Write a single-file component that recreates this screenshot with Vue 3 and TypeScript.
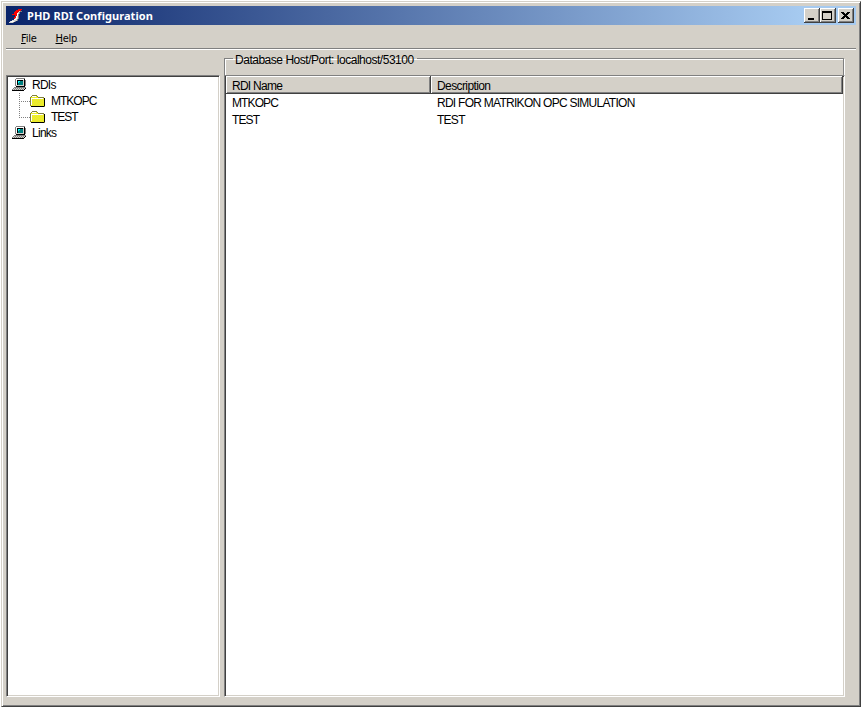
<script setup lang="ts">
interface Rdi {
  name: string
  description: string
}

const rdis: Rdi[] = [
  { name: 'MTKOPC', description: 'RDI FOR MATRIKON OPC SIMULATION' },
  { name: 'TEST', description: 'TEST' },
]
</script>

<template>
  <div class="window">
    <header class="titlebar">
      <svg class="logo" width="16" height="16" viewBox="0 0 16 16" shape-rendering="crispEdges">
        <path fill="#808080" d="M12 3h2v1h-2v2h-1v5h-1v2H8v1H6v1H1v-1h3v-1h3v-2h1V8h1V5h2V3z" />
        <path fill="#d8d8d8" d="M10 3h2v1h-1v2h-1v5H9v2H7v1H5v1H1v-1h1v-1h2v-1h2v-1h1V9h1V5h2z" />
        <path fill="#fff" d="M9 5h1v3H9zM8 8h1v3H8zM6 11h2v1H6zM3 13h3v1H3z" />
        <path fill="#f00" d="M10 1h4v1h-1v1h-2v1h-1v1H9v3H8v2H7v1H6V9h1V7H4V6h2V4h1V3h1V2h2z" />
      </svg>
      <h1>PHD RDI Configuration</h1>
      <div class="controls">
        <button type="button" aria-label="Minimize">
          <svg width="16" height="15" shape-rendering="crispEdges"><path d="M4 10h6v2H4z" /></svg>
        </button>
        <button type="button" aria-label="Maximize">
          <svg width="16" height="15" shape-rendering="crispEdges"><path fill-rule="evenodd" d="M2 3h10v9H2zM3 5v6h8V5z" /></svg>
        </button>
        <button type="button" class="close" aria-label="Close">
          <svg width="16" height="15" shape-rendering="crispEdges">
            <path d="M3 4h3v1h1v1h1V5h1V4h3v1h-1v1h-1v1H9v1h1v1h1v1h1v1H9v-1H8V9H7v1H6v1H3v-1h1V9h1V8h1V7H5V6H4V5H3z" />
          </svg>
        </button>
      </div>
    </header>

    <nav class="menu">
      <a><u>F</u>ile</a>
      <a class="help"><u>H</u>elp</a>
    </nav>

    <main class="content">
      <aside class="tree">
        <svg class="defs" width="0" height="0">
          <symbol id="computer" viewBox="0 0 16 16">
            <path fill="#808080" d="M4 1h9v1H4zM3 2h1v7H3zM2 10h12v1H2zM1 11h1v1H1zM0 12h1v1H0z" />
            <path fill="#d4d0c8" d="M4 2h8v7H4zM2 11h11v1H2zM1 12h11v1H1z" />
            <path fill="#fff" d="M4 2h8v1H4zM4 3h1v5H4z" />
            <path fill="#000" d="M5 3h6v1H5zM5 4h1v4H5zM12 2h1v7h-1zM4 9h9v1H4zM13 11h1v1h-1zM12 12h1v1h-1zM0 13h12v1H0z" />
            <path fill="#008080" d="M6 4h5v4H6z" />
            <path fill="#0ff" d="M6 4h2v1H6zM6 5h1v1H6z" />
            <path fill="#808080" d="M3 11h1v1H3zM5 11h1v1H5zM7 11h1v1H7zM9 11h1v1H9zM11 11h1v1h-1zM2 12h1v1H2zM4 12h1v1H4zM6 12h1v1H6zM8 12h1v1H8zM10 12h1v1h-1zM13 3h1v6h-1z" />
          </symbol>
          <pattern id="dither" width="2" height="2" patternUnits="userSpaceOnUse">
            <path fill="#ff0" d="M0 0h2v2H0z" />
            <path fill="#d8d858" d="M0 0h1v1H0zM1 1h1v1H1z" />
          </pattern>
          <symbol id="folder" viewBox="0 0 16 16">
            <path fill="#808040" d="M2 2h5v1h1v1h6v1h1v9H1v-1H0V4h1V3h1z" />
            <path fill="url(#dither)" d="M2 3h5v1h1v1h6v8H1V4h1z" />
            <path fill="#fff" d="M2 3h4v1H2zM1 5h12v1H1zM1 6h1v6H1z" />
            <path fill="#000" d="M14 5h1v8h-1zM1 13h13v1H1z" />
          </symbol>
        </svg>
        <ul class="nodes">
          <li class="node"><svg width="16" height="16" shape-rendering="crispEdges"><use href="#computer" /></svg><span>RDIs</span></li>
          <li v-for="(rdi, i) in rdis" :key="rdi.name" class="node child">
            <svg class="branch" width="11" height="16" shape-rendering="crispEdges">
              <path :d="i === rdis.length - 1 ? 'M.5 0v9' : 'M.5 0v16'" />
              <path d="M0 8.5h11" />
            </svg>
            <svg width="16" height="16" shape-rendering="crispEdges"><use href="#folder" /></svg>
            <span>{{ rdi.name }}</span>
          </li>
          <li class="node"><svg width="16" height="16" shape-rendering="crispEdges"><use href="#computer" /></svg><span>Links</span></li>
        </ul>
      </aside>

      <section class="detail">
        <fieldset class="host">
          <legend><span>Database Host/Port: localhost/53100</span></legend>
        </fieldset>
        <div class="list">
          <div class="head">
            <div class="col name">RDI Name</div>
            <div class="col desc">Description</div>
          </div>
          <div v-for="rdi in rdis" :key="rdi.name" class="row">
            <span class="name">{{ rdi.name }}</span>
            <span>{{ rdi.description }}</span>
          </div>
        </div>
      </section>
    </main>
  </div>
</template>

<style>
body {
  margin: 0;
  background: #fff;
}
</style>

<style scoped>
* {
  box-sizing: border-box;
}

.window {
  display: flex;
  flex-direction: column;
  width: 860px;
  height: 706px;
  margin: 1px;
  padding: 4px;
  border: 1px solid;
  border-color: #d4d0c8 #404040 #404040 #d4d0c8;
  box-shadow: inset 1px 1px #fff, inset -1px -1px #808080;
  background: #d4d0c8;
  font: 12px/16px "Liberation Sans", Arial, sans-serif;
  letter-spacing: -0.73px;
  color: #000;
}

.titlebar {
  display: flex;
  align-items: center;
  height: 19px;
  flex: none;
  padding: 0 2px;
  background: linear-gradient(90deg, #0a246a, #a6caf0 795px);
}

.logo {
  display: block;
  margin-right: 3px;
}

h1 {
  margin: 0;
  flex: 1;
  font: bold 11px/18px "Noto Sans", Tahoma, sans-serif;
  white-space: nowrap;
  letter-spacing: 0.06px;
  color: #fff;
}

.controls {
  display: flex;
}

button {
  width: 16px;
  height: 15px;
  padding: 0;
  border: 0;
  background: #d4d0c8;
  box-shadow: inset -1px -1px #404040, inset 1px 1px #fff, inset -2px -2px #808080;
}

button svg {
  display: block;
}

.close {
  margin-left: 2px;
}

.menu {
  display: flex;
  flex: none;
  height: 25px;
  padding: 6px 15px 0;
  border-bottom: 1px solid #fff;
  box-shadow: inset 0 -1px #808080;
  font: 11px/16px "DejaVu Sans Condensed", "Noto Sans", Tahoma, sans-serif;
  letter-spacing: -0.25px;
}

.help {
  margin-left: 19px;
}

u {
  text-decoration: underline;
  text-underline-offset: 1px;
}

.content {
  display: flex;
  gap: 4px;
  flex: 1;
  padding: 8px 11px 5px 0;
}

.tree,
.list {
  border: 1px solid;
  border-color: #808080 #fff #fff #808080;
  box-shadow: inset 1px 1px #404040, inset -1px -1px #d4d0c8;
  background: #fff;
}

.tree {
  width: 214px;
  margin-top: 17px;
}

.defs {
  display: block;
}

.nodes {
  margin: 0;
  padding: 1px 0 0 5px;
  list-style: none;
}

.node {
  display: flex;
  height: 16px;
}

.node span {
  margin-left: 4px;
}

.child {
  padding-left: 7px;
}

.child span {
  margin-left: 5px;
  letter-spacing: -1px;
}

.branch path {
  stroke: #808080;
  stroke-dasharray: 1 1;
}

.detail {
  display: flex;
  flex-direction: column;
  flex: 1;
}

.host {
  height: 25px;
  margin: -7px 1px 0 0;
  padding: 0 0 0 8px;
  border: 1px solid #808080;
  box-shadow: inset 1px 1px #fff, 1px 1px #fff;
}

legend {
  height: 15px;
  padding: 0 3px 0 2px;
  letter-spacing: -0.48px;
}

legend span {
  display: block;
  padding-top: 1px;
}

.list {
  flex: 1;
  margin-top: -1px;
}

.head {
  display: flex;
  height: 18px;
  margin: 0 1px;
}

.col {
  height: 18px;
  padding-left: 6px;
  line-height: 20px;
  background: #d4d0c8;
  box-shadow: inset -1px -1px #404040, inset 1px 1px #fff, inset -2px -2px #808080;
}

.name {
  width: 205px;
}

.desc {
  flex: 1;
  letter-spacing: -0.6px;
}

.row {
  display: flex;
  height: 17px;
  padding-left: 7px;
  line-height: 18px;
}

.row .name {
  letter-spacing: -0.9px;
}
</style>
